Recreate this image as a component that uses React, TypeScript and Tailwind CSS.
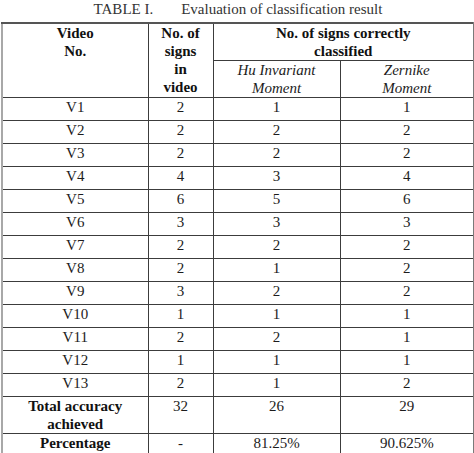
import React from "react";

type Row = { video: string; signs: string; hu: string; zernike: string };

const rows: Row[] = [
  { video: "V1", signs: "2", hu: "1", zernike: "1" },
  { video: "V2", signs: "2", hu: "2", zernike: "2" },
  { video: "V3", signs: "2", hu: "2", zernike: "2" },
  { video: "V4", signs: "4", hu: "3", zernike: "4" },
  { video: "V5", signs: "6", hu: "5", zernike: "6" },
  { video: "V6", signs: "3", hu: "3", zernike: "3" },
  { video: "V7", signs: "2", hu: "2", zernike: "2" },
  { video: "V8", signs: "2", hu: "1", zernike: "2" },
  { video: "V9", signs: "3", hu: "2", zernike: "2" },
  { video: "V10", signs: "1", hu: "1", zernike: "1" },
  { video: "V11", signs: "2", hu: "2", zernike: "1" },
  { video: "V12", signs: "1", hu: "1", zernike: "1" },
  { video: "V13", signs: "2", hu: "1", zernike: "2" },
];

const serif = "[font-family:'Liberation_Serif',serif] text-[15px] leading-[18px]";
const cell = `${serif} border border-[#3c3c3c] text-center align-top p-0 text-[#1c1c1c]`;
const bold = "font-bold text-[#111]";

export default function App() {
  return (
    <div className={`w-[474px] h-[453px] bg-white overflow-hidden ${serif}`}>
      {/* caption */}
      <div className="h-[22px] flex justify-center gap-[28px] pl-[2px] text-[#333]">
        <span>TABLE I.</span>
        <span>Evaluation of classification result</span>
      </div>

      <table
        className={`${serif} ml-[1px] w-[472px] table-fixed border-collapse border-2 border-l-[#a8a8a8] border-r-[#7a7a7a] border-t-[#555] border-b-[#b8b8b8]`}
      >
        <colgroup>
          <col className="w-[146px]" />
          <col className="w-[65px]" />
          <col className="w-[127px]" />
          <col className="w-[134px]" />
        </colgroup>
        <thead>
          <tr className="h-[35px]">
            <th rowSpan={2} className={`${cell} ${bold}`}>
              Video
              <br />
              No.
            </th>
            <th rowSpan={2} className={`${cell} ${bold} leading-[17px]`}>
              No. of
              <br />
              signs
              <br />
              in
              <br />
              video
            </th>
            <th colSpan={2} className={`${cell} ${bold}`}>
              No. of signs correctly
              <br />
              classified
            </th>
          </tr>
          <tr className="h-[34px]">
            <th className={`${cell} font-normal italic leading-[17px]`}>
              Hu Invariant
              <br />
              Moment
            </th>
            <th className={`${cell} font-normal italic leading-[17px]`}>
              Zernike
              <br />
              Moment
            </th>
          </tr>
        </thead>
        <tbody>
          {rows.map((r) => (
            <tr key={r.video} className="h-[23px]">
              <td className={cell}>{r.video}</td>
              <td className={cell}>{r.signs}</td>
              <td className={cell}>{r.hu}</td>
              <td className={cell}>{r.zernike}</td>
            </tr>
          ))}
          <tr className="h-[32px]">
            <td className={`${cell} ${bold} leading-[16px]`}>
              Total accuracy
              <br />
              achieved
            </td>
            <td className={`${cell} leading-[16px]`}>32</td>
            <td className={`${cell} leading-[16px]`}>26</td>
            <td className={`${cell} leading-[16px]`}>29</td>
          </tr>
          <tr className="h-[22px]">
            <td className={`${cell} ${bold}`}>Percentage</td>
            <td className={cell}>-</td>
            <td className={cell}>81.25%</td>
            <td className={cell}>90.625%</td>
          </tr>
        </tbody>
      </table>
    </div>
  );
}
